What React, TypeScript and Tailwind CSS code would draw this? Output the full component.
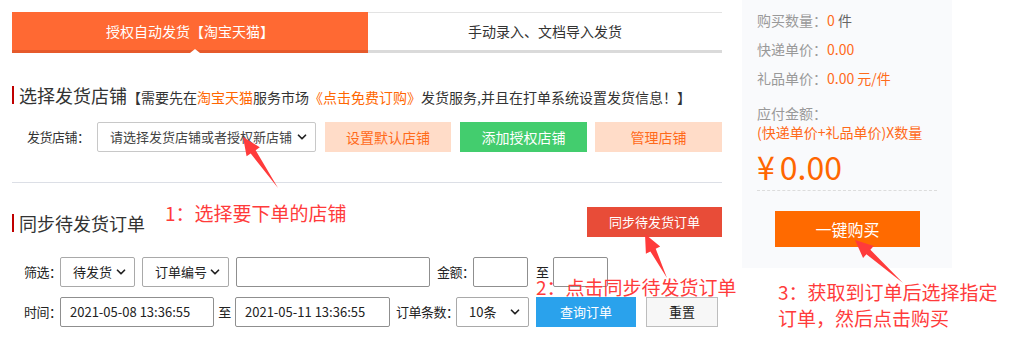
import { ChevronDown } from "lucide-react";

const font = { fontFamily: '"Microsoft YaHei", "Noto Sans CJK SC", "Noto Sans", sans-serif' };

// ── Form bits ──────────────────────────────────────────────

function Select({ text, className }: { text: string; className: string }) {
  return (
    <div className={`h-[30px] shrink-0 border border-[#a9a9a9] rounded-[2px] bg-white flex items-center justify-between pl-[12px] pr-[6px] text-[13px] text-[#222] whitespace-nowrap ${className}`}>
      <span>{text}</span>
      <ChevronDown size={14} strokeWidth={3} className="text-[#222]" />
    </div>
  );
}

function Input({ value, className }: { value?: string; className: string }) {
  return (
    <div className={`h-[30px] shrink-0 border border-[#8f8f8f] rounded-[2px] bg-white flex items-center pl-[9px] text-[13px] text-[#222] whitespace-nowrap ${className}`}>
      {value}
    </div>
  );
}

function Label({ children, className }: { children: React.ReactNode; className: string }) {
  return <span className={`shrink-0 whitespace-nowrap tracking-[-0.5px] ${className}`}>{children}</span>;
}

function Title({ children }: { children: React.ReactNode }) {
  return (
    <div className="flex items-center whitespace-nowrap">
      <span className="w-[2px] h-[18px] bg-[#c00000]" />
      <span className="ml-[5px] text-[18px] text-[#333] leading-none">{children}</span>
    </div>
  );
}

// ── Arrows over the screenshot ─────────────────────────────

function Arrow({ x1, y1, x2, y2 }: { x1: number; y1: number; x2: number; y2: number }) {
  const dx = x2 - x1;
  const dy = y2 - y1;
  const len = Math.hypot(dx, dy);
  const ux = dx / len;
  const uy = dy / len;
  const nx = -uy;
  const ny = ux;
  const hb = { x: x2 - ux * 18, y: y2 - uy * 18 };
  const pts = [
    `${x1},${y1}`,
    `${hb.x + nx * 3},${hb.y + ny * 3}`,
    `${hb.x + nx * 8},${hb.y + ny * 8}`,
    `${x2},${y2}`,
    `${hb.x - nx * 8},${hb.y - ny * 8}`,
    `${hb.x - nx * 3},${hb.y - ny * 3}`,
  ].join(" ");
  return <polygon points={pts} fill="#ff3b3b" />;
}

export default function App() {
  return (
    <div className="relative w-[1013px] h-[340px] bg-white overflow-hidden flex" style={font}>
      {/* ── Left: main form ── */}
      <div className="w-[710px] ml-[12px] pt-[12px] shrink-0">
        {/* tabs */}
        <div className="flex">
          <div className="relative w-[356px] h-[41px] bg-[#ff6933] border-b-[3px] border-[#e65a2b] flex items-center justify-center text-[14px] text-white">
            授权自动发货【淘宝天猫】
            <span className="absolute left-[178px] -bottom-[3px] w-0 h-0 border-x-[5px] border-x-transparent border-b-[4px] border-b-white" />
          </div>
          <div className="flex-1 h-[41px] border-t border-[#e3e3e3] border-b-[3px] border-b-[#dadada] flex items-center justify-center text-[14px] text-[#333]">
            手动录入、文档导入发货
          </div>
        </div>

        {/* section 1 */}
        <div className="mt-[33px]">
          <Title>
            选择发货店铺
            <span className="text-[14px] text-[#333]">
              【需要先在<span className="text-[#ff6600]">淘宝天猫</span>服务市场<span className="text-[#ff6600]">《点击免费订购》</span>发货服务,并且在打单系统设置发货信息！】
            </span>
          </Title>
        </div>
        <div className="mt-[18px] flex items-center text-[13px]">
          <Label className="ml-[15px] w-[70px] text-[#333]">发货店铺：</Label>
          <Select text="请选择发货店铺或者授权新店铺" className="w-[219px] !border-[#c8c8c8] !text-[#444]" />
          <div className="ml-[9px] w-[126px] h-[30px] bg-[#ffdcc8] text-[#ff6a1a] text-[14px] flex items-center justify-center">设置默认店铺</div>
          <div className="ml-[9px] w-[127px] h-[30px] bg-[#43cd6e] text-white text-[14px] flex items-center justify-center">添加授权店铺</div>
          <div className="ml-[8px] w-[127px] h-[30px] bg-[#ffdcc8] text-[#ff6a1a] text-[14px] flex items-center justify-center">管理店铺</div>
        </div>
        <div className="mt-[30px] h-px bg-[#dcdfe6]" />

        {/* section 2 */}
        <div className="mt-[24px] flex items-center justify-between">
          <div className="mt-[2px]">
            <Title>同步待发货订单</Title>
          </div>
          <div className="w-[135px] h-[30px] bg-[#e84c38] text-white text-[13px] flex items-center justify-center">同步待发货订单</div>
        </div>

        <div className="mt-[20px] flex items-center text-[13px] text-[#222]">
          <Label className="ml-[12px] w-[36px]">筛选：</Label>
          <Select text="待发货" className="w-[75px]" />
          <Select text="订单编号" className="ml-[7px] w-[87px] !pl-[12px]" />
          <Input className="ml-[7px] w-[194px]" />
          <Label className="ml-[7px] w-[36px]">金额：</Label>
          <Input className="w-[55px]" />
          <Label className="ml-[8px] w-[17px]">至</Label>
          <Input className="w-[55px]" />
        </div>
        <div className="mt-[10px] flex items-center text-[13px] text-[#222]">
          <Label className="ml-[12px] w-[36px]">时间：</Label>
          <Input value="2021-05-08 13:36:55" className="w-[154px]" />
          <Label className="w-[21px] text-center">至</Label>
          <Input value="2021-05-11 13:36:55" className="w-[155px]" />
          <Label className="ml-[6px] w-[60px]">订单条数：</Label>
          <Select text="10条" className="w-[73px]" />
          <div className="ml-[7px] w-[100px] h-[30px] shrink-0 bg-[#2aa2ec] text-white flex items-center justify-center">查询订单</div>
          <div className="ml-[10px] w-[72px] h-[30px] shrink-0 bg-[#f7f7f7] border border-[#bdbdbd] flex items-center justify-center">重置</div>
        </div>
      </div>

      {/* ── Right: price panel ── */}
      <div className="ml-[20px] w-[210px] h-[268px] bg-[#f9fafc] shrink-0 px-[15px] pt-[6px] text-[14px]">
        <div className="leading-[29px] text-[#999]">
          <div>购买数量：<span className="text-[#ff6a1a]">0</span> <span className="text-[#666]">件</span></div>
          <div>快递单价：<span className="text-[#ff6a1a]">0.00</span></div>
          <div>礼品单价：<span className="text-[#ff6a1a]">0.00 元/件</span></div>
        </div>
        <div className="mt-[11px] text-[#999] leading-[18px]">应付金额：</div>
        <div className="text-[#ff6a1a] leading-[20px]">(快递单价+礼品单价)X数量</div>
        <div className="mt-[8px] text-[32px] leading-none text-[#ff6600] flex items-baseline">
          <span>¥</span>
          <span className="ml-[5px]">0.00</span>
        </div>
        <div className="mt-[8px] w-[180px] border-t border-dashed border-[#dcdcdc]" />
        <div className="mt-[20px] ml-[18px] w-[145px] h-[36px] bg-[#ff6a00] text-white text-[16px] flex items-center justify-center">一键购买</div>
      </div>

      {/* ── Annotations ── */}
      <div className="absolute left-[165px] top-[203px] text-[19px] text-[#ff3b3b] leading-none whitespace-nowrap">1：选择要下单的店铺</div>
      <div className="absolute left-[536px] top-[277px] text-[19px] text-[#ff3b3b] leading-none whitespace-nowrap">2：点击同步待发货订单</div>
      <div className="absolute left-[778px] top-[279px] text-[19px] text-[#ff3b3b] leading-[26px] whitespace-nowrap">
        3：获取到订单后选择指定
        <br />
        订单，然后点击购买
      </div>
      <svg className="absolute left-0 top-0 pointer-events-none" width="1013" height="340">
        <Arrow x1={278} y1={188} x2={243} y2={137} />
        <Arrow x1={667} y1={278} x2={645} y2={234} />
        <Arrow x1={903} y1={283} x2={855} y2={240} />
      </svg>
    </div>
  );
}
